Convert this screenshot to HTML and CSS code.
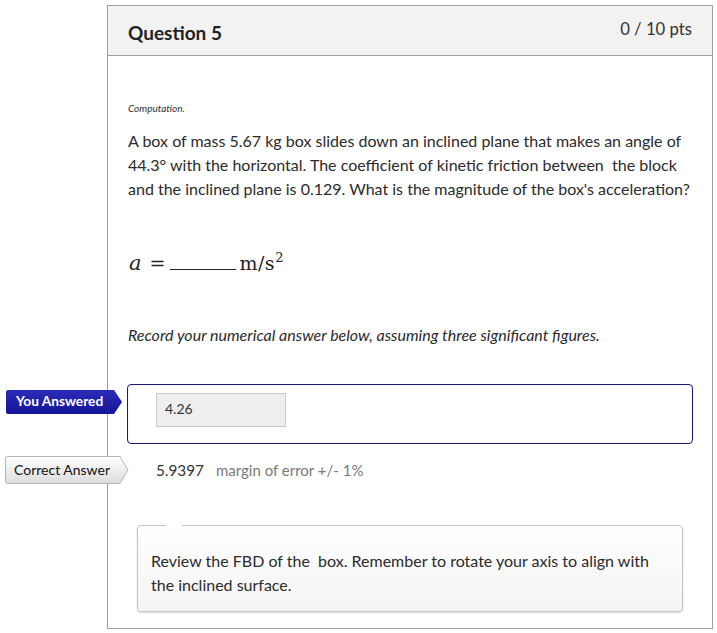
FILE: index.html
```html
<!DOCTYPE html>
<html>
<head>
<meta charset="utf-8">
<link rel="stylesheet" href="styles.css">
</head>
<body>
<div class="card">
  <div class="card-header">
    <span class="q-title">Question 5</span>
    <span class="q-pts">0 / 10 pts</span>
  </div>
  <div class="card-body">
    <div class="computation">Computation.</div>
    <div class="question">A box of mass 5.67 kg box slides down an inclined plane that makes an angle of 44.3° with the horizontal. The coefficient of kinetic friction between&nbsp; the block and the inclined plane is 0.129. What is the magnitude of the box's acceleration?</div>
    <div class="formula"><span class="var">a</span><span class="eq">=</span><span class="blank"></span><span class="unit">m/s<sup>2</sup></span></div>
    <div class="record">Record your numerical answer below, assuming three significant figures.</div>

    <div class="answer-box">
      <div class="label label-you">
        <svg class="label-shape" width="117" height="24" viewBox="0 0 117 24"><defs><linearGradient id="gy" x1="0" y1="0" x2="0" y2="1"><stop offset="0" stop-color="#2b2bb8"/><stop offset="1" stop-color="#15159a"/></linearGradient></defs><path d="M2 0 H108 L116 12 L108 24 H2 Q0 24 0 22 V2 Q0 0 2 0 Z" fill="url(#gy)"/></svg>
        <span class="label-text">You Answered</span>
      </div>
      <div class="input-box">4.26</div>
    </div>

    <div class="correct-row">
      <div class="label label-correct">
        <svg class="label-shape" width="124" height="28" viewBox="0 0 124 28"><defs><linearGradient id="gc" x1="0" y1="0" x2="0" y2="1"><stop offset="0" stop-color="#ffffff"/><stop offset="1" stop-color="#dcdcdc"/></linearGradient></defs><path d="M2.5 0.5 H115 L123 14 L115 27.5 H2.5 Q0.5 27.5 0.5 25.5 V2.5 Q0.5 0.5 2.5 0.5 Z" fill="url(#gc)" stroke="#b5b5b5"/></svg>
        <span class="label-text">Correct Answer</span>
      </div>
      <span class="correct-val">5.9397</span>
      <span class="margin">margin of error +/- 1%</span>
    </div>

    <div class="comment">
      <span class="notch"></span>
      Review the FBD of the&nbsp; box. Remember to rotate your axis to align with the inclined surface.
    </div>
  </div>
</div>
</body>
</html>
```

FILE: styles.css
```css
html, body {
  margin: 0;
  padding: 0;
  background: #ffffff;
}
body {
  font-family: Lato, "Open Sans", sans-serif;
  color: #2b2b2b;
  padding: 5px 0 0 107px;
}
.card {
  width: 604px;
  border: 1px solid #9e9e9e;
  background: #fff;
}
.card-header {
  height: 49px;
  background: #f2f2f2;
  border-bottom: 1px solid #9e9e9e;
  display: flex;
  align-items: center;
  justify-content: space-between;
  padding: 0 20px 0 20px;
}
.q-title {
  font-size: 19px;
  font-weight: 700;
  color: #222;
  padding-top: 3px;
}
.q-pts {
  font-size: 16.7px;
  color: #333;
  padding-bottom: 4px;
}
.card-body {
  padding: 0 20px 16px 20px;
}
.computation {
  margin-top: 44px;
  font-size: 10px;
  line-height: 16px;
  font-style: italic;
  color: #333;
}
.question {
  margin-top: 13px;
  width: 565px;
  font-size: 16px;
  line-height: 24px;
}
.formula {
  margin-top: 47px;
  height: 30px;
  line-height: 30px;
  font-family: "DejaVu Serif", "Liberation Serif", serif;
  font-size: 19px;
  display: flex;
  align-items: baseline;
  color: #222;
}
.formula .var {
  font-style: italic;
  font-size: 21px;
  margin-left: 1px;
}
.formula .eq {
  margin-left: 8px;
}
.formula .blank {
  display: inline-block;
  width: 66px;
  height: 1px;
  border-bottom: 1px solid #222;
  margin-left: 5px;
  margin-right: 3px;
}
.formula .unit {
  letter-spacing: 0.5px;
}
.formula sup {
  font-size: 13px;
  line-height: 0;
  vertical-align: 8px;
}
.record {
  margin-top: 45px;
  font-size: 16px;
  line-height: 24px;
  font-style: italic;
}
.answer-box {
  position: relative;
  margin-top: 37px;
  margin-left: -1px;
  width: 564px;
  height: 58px;
  border: 1px solid #1c1c6e;
  border-radius: 4px;
  box-shadow: inset 0 0 2px #d8d8ff;
  display: flex;
  align-items: flex-start;
}
.input-box {
  margin: 8px 0 0 28px;
  width: 130px;
  height: 34px;
  background: #eeeeee;
  border: 1px solid #c8c8c8;
  box-sizing: border-box;
  font-size: 14px;
  line-height: 30px;
  padding-left: 8px;
  color: #333;
}
.label {
  position: absolute;
  display: flex;
  align-items: center;
}
.label-shape {
  position: absolute;
  left: 0;
  top: 0;
}
.label-text {
  position: relative;
  font-size: 13.7px;
  font-weight: 700;
}
.label-you {
  left: -122px;
  top: 5px;
  width: 117px;
  height: 24px;
}
.label-you .label-text {
  color: #fff;
  padding-left: 10px;
  padding-bottom: 3px;
}
.correct-row {
  position: relative;
  margin-top: 12px;
  height: 28px;
  display: flex;
  align-items: center;
  padding-left: 28px;
}
.label-correct {
  left: -123px;
  top: 0;
  width: 124px;
  height: 28px;
}
.label-correct .label-text {
  color: #111;
  font-size: 14px;
  font-weight: 400;
  padding-left: 9px;
  padding-bottom: 2px;
}
.correct-val {
  font-size: 15.3px;
  color: #333;
}
.margin {
  font-size: 15px;
  color: #7a7a7a;
  margin-left: 12px;
}
.comment {
  position: relative;
  margin-top: 41px;
  margin-left: 9px;
  width: 546px;
  box-sizing: border-box;
  border: 1px solid #c4c4c4;
  border-radius: 4px;
  background: linear-gradient(#ffffff, #f4f4f4);
  box-shadow: 0 1px 2px rgba(0,0,0,0.15);
  padding: 23px 10px 14px 13px;
  font-size: 16px;
  line-height: 24px;
}
.notch {
  position: absolute;
  top: -2px;
  left: 28px;
  width: 16px;
  height: 3px;
  background: #fff;
}
```
